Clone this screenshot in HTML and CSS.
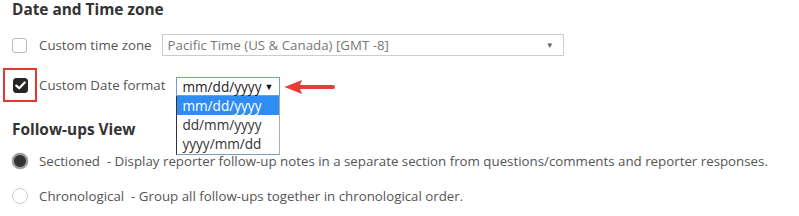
FILE: index.html
```html
<!DOCTYPE html>
<html>
<head>
<meta charset="utf-8">
<link rel="stylesheet" href="styles.css">
</head>
<body>
<div class="page">
  <h2 class="heading heading-first">Date and Time zone</h2>

  <div class="row row-tz">
    <span class="check"></span>
    <span class="label">Custom time zone</span>
    <div class="select select-tz">
      <span class="select-text">Pacific Time (US &amp; Canada) [GMT -8]</span>
      <span class="caret caret-grey">&#9660;</span>
    </div>
  </div>

  <div class="row row-df">
    <span class="mark-box">
      <span class="check checked">
        <svg width="11" height="9" viewBox="0 0 11 9"><path d="M1.3 4.6 L4.2 7.3 L9.7 1.5" fill="none" stroke="#fff" stroke-width="2.2" stroke-linecap="round" stroke-linejoin="round"/></svg>
      </span>
    </span>
    <span class="label label-df">Custom Date format</span>
    <div class="select-wrap">
      <div class="select select-df">
        <span class="select-text">mm/dd/yyyy</span>
        <span class="caret caret-dark">&#9660;</span>
      </div>
      <ul class="dropdown">
        <li class="opt opt-active">mm/dd/yyyy</li>
        <li class="opt">dd/mm/yyyy</li>
        <li class="opt">yyyy/mm/dd</li>
      </ul>
    </div>
    <svg class="pointer" width="52" height="16" viewBox="0 0 52 16">
      <path d="M0.5 8 L18 1 L16 6 L49 6 Q51 6 51 8 Q51 10 49 10 L16 10 L18 15 Z" fill="#eb3b32"/>
    </svg>
  </div>

  <h2 class="heading heading-second">Follow-ups View</h2>

  <div class="row radio-row radio-row-1">
    <span class="radio radio-on"></span>
    <span class="label">Sectioned&nbsp; - Display reporter follow-up notes in a separate section from questions/comments and reporter responses.</span>
  </div>
  <div class="row radio-row radio-row-2">
    <span class="radio"></span>
    <span class="label">Chronological&nbsp; - Group all follow-ups together in chronological order.</span>
  </div>
</div>
</body>
</html>
```

FILE: styles.css
```css
html, body {
  margin: 0;
  padding: 0;
  background: #fff;
}

.page {
  padding-left: 12px;
  font-family: "Open Sans", "Liberation Sans", sans-serif;
  color: #555;
}

.heading {
  margin: 0;
  font-size: 15.4px;
  font-weight: 700;
  line-height: 20px;
  color: #333;
}

.heading-second {
  margin-top: 18px;
}

.row {
  display: flex;
  align-items: center;
}

.row-tz {
  margin-top: 14px;
  height: 22px;
}

.row-df {
  margin-top: 12px;
  height: 34px;
}

.check {
  width: 15px;
  height: 15px;
  box-sizing: border-box;
  border: 1px solid #bbb;
  border-radius: 3px;
  background: #fff;
  display: flex;
  align-items: center;
  justify-content: center;
  flex: none;
}

.check.checked {
  background: #262626;
  border-color: #262626;
}

.label {
  font-size: 13.3px;
  line-height: 18px;
  color: #555;
  white-space: nowrap;
}

.row-tz .label {
  margin-left: 12px;
}

.mark-box {
  margin-left: -9px;
  width: 34px;
  height: 34px;
  box-sizing: border-box;
  border: 2px solid #e8362e;
  display: flex;
  align-items: center;
  justify-content: center;
  flex: none;
}

.label-df {
  margin-left: 2px;
}

.select {
  box-sizing: border-box;
  display: flex;
  align-items: center;
  background: #fff;
}

.select-tz {
  margin-left: 10px;
  width: 402px;
  height: 22px;
  border: 1px solid #ccc;
  padding: 0 9px 0 5px;
  font-size: 13.3px;
  color: #777;
}

.select-text {
  flex: 1;
  white-space: nowrap;
}

.caret {
  font-size: 8px;
  line-height: 1;
}

.caret-grey {
  color: #666;
}

.caret-dark {
  color: #111;
  font-size: 9px;
}

.select-wrap {
  position: relative;
  margin-left: 11px;
  margin-top: 3px;
}

.select-df {
  width: 104px;
  height: 19px;
  border: 1px solid #6d9ee0;
  padding: 0 6px 0 5px;
  font-size: 13.6px;
  color: #222;
}

.dropdown {
  position: absolute;
  left: 0;
  top: 19px;
  width: 104px;
  box-sizing: border-box;
  margin: 0;
  padding: 0 0 1px;
  list-style: none;
  background: #fff;
  border-left: 1px solid #333;
  border-right: 1px solid #aaa;
  border-bottom: 1px solid #7f9db9;
  z-index: 2;
}

.opt {
  height: 19px;
  line-height: 19px;
  padding-left: 5px;
  font-size: 13.6px;
  color: #333;
  white-space: nowrap;
}

.opt-active {
  background: #2f8cf3;
  color: #fff;
}

.pointer {
  margin-left: 4px;
  margin-top: 3px;
  flex: none;
}

.radio-row {
  height: 20px;
}

.radio-row-1 {
  margin-top: 11px;
}

.radio-row-2 {
  margin-top: 15px;
}

.radio {
  width: 16px;
  height: 16px;
  box-sizing: border-box;
  border-radius: 50%;
  border: 1px solid #ccc;
  background: #fff;
  flex: none;
}

.radio-on {
  background: #333;
  border: 2px solid #9a9a9a;
  box-shadow: 0 0 0 0.5px #ccc;
}

.radio-row .label {
  margin-left: 11px;
}
```
